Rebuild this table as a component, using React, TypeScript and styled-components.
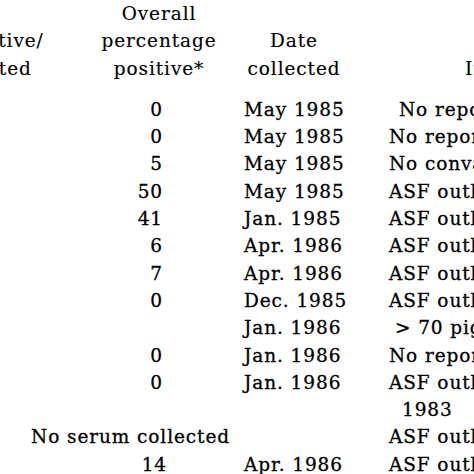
import React from "react";
import styled, { createGlobalStyle } from "styled-components";

type Entry = {
  count?: string;
  nudge?: number;
  date?: string;
  note: string;
  indent?: number;
  span?: string;
};

const rows: Entry[] = [
  { count: "0", date: "May 1985", note: "No reported ASF", indent: 10 },
  { count: "0", date: "May 1985", note: "No reported ASF" },
  { count: "5", date: "May 1985", note: "No convalescent pigs" },
  { count: "50", date: "May 1985", note: "ASF outbreak 1984" },
  { count: "41", date: "Jan. 1985", note: "ASF outbreak 1984" },
  { count: "6", date: "Apr. 1986", note: "ASF outbreak 1985" },
  { count: "7", date: "Apr. 1986", note: "ASF outbreak 1985" },
  { count: "0", date: "Dec. 1985", note: "ASF outbreak 1985," },
  { date: "Jan. 1986", note: "> 70 pigs died", indent: 6 },
  { count: "0", date: "Jan. 1986", note: "No reported ASF" },
  { count: "0", date: "Jan. 1986", note: "ASF outbreak" },
  { note: "1983", indent: 13 },
  { span: "No serum collected", note: "ASF outbreak 1985" },
  { count: "14", nudge: 4, date: "Apr. 1986", note: "ASF outbreak 1985" },
];

const App: React.FC = () => {
  return (
    <>
      <GlobalStyle />
      <Table>
        <HeadRow>
          <HeadCell $col={1} $padRight={24}>
            positive/
            <br />
            tested
          </HeadCell>
          <HeadCell $col={2} $padLeft={4}>
            Overall
            <br />
            percentage
            <br />
            positive*
          </HeadCell>
          <HeadCell $col={3} $padLeft={14} $padRight={41}>
            Date
            <br />
            collected
          </HeadCell>
          <HeadCell $col={4} $padLeft={80} $align="left">
            Information
          </HeadCell>
        </HeadRow>
        {rows.map((r, i) => (
          <Row key={i}>
            {r.span && <Spanned>{r.span}</Spanned>}
            {r.count && <Count $nudge={r.nudge ?? 0}>{r.count}</Count>}
            {r.date && <DateCell>{r.date}</DateCell>}
            <Note $indent={r.indent ?? 0}>{r.note}</Note>
          </Row>
        ))}
      </Table>
    </>
  );
};

export default App;

const GlobalStyle = createGlobalStyle`
  html, body {
    margin: 0;
    padding: 0;
    background: #fff;
    overflow: hidden;
  }
  body {
    font-family: "DejaVu Serif", "Liberation Serif", serif;
    color: #000;
  }
`;

const Table = styled.div`
  width: 620px;
  margin-left: -60px;
  font-size: 18.5px;
  line-height: 27.3px;
  letter-spacing: 0.9px;
  white-space: nowrap;
  -webkit-text-stroke: 0.3px #000;
`;

const Row = styled.div`
  display: grid;
  grid-template-columns: 144px 146px 155px 1fr;
  height: 27.3px;
`;

const HeadRow = styled(Row)`
  height: auto;
  align-items: end;
  margin-bottom: 14px;
  -webkit-text-stroke: 0.15px #000;
`;

const HeadCell = styled.div<{
  $col: number;
  $padLeft?: number;
  $padRight?: number;
  $align?: string;
}>`
  grid-column: ${({ $col }) => $col};
  padding-left: ${({ $padLeft }) => $padLeft ?? 0}px;
  padding-right: ${({ $padRight }) => $padRight ?? 0}px;
  text-align: ${({ $align }) => $align ?? "center"};
`;

const Spanned = styled.div`
  grid-column: 1 / 3;
  text-align: right;
`;

const Count = styled.div<{ $nudge: number }>`
  grid-column: 2;
  text-align: right;
  padding-right: ${({ $nudge }) => 67 - $nudge}px;
`;

const DateCell = styled.div`
  grid-column: 3;
  padding-left: 14px;
`;

const Note = styled.div<{ $indent: number }>`
  grid-column: 4;
  padding-left: ${({ $indent }) => 4 + $indent}px;
  overflow: hidden;
`;
